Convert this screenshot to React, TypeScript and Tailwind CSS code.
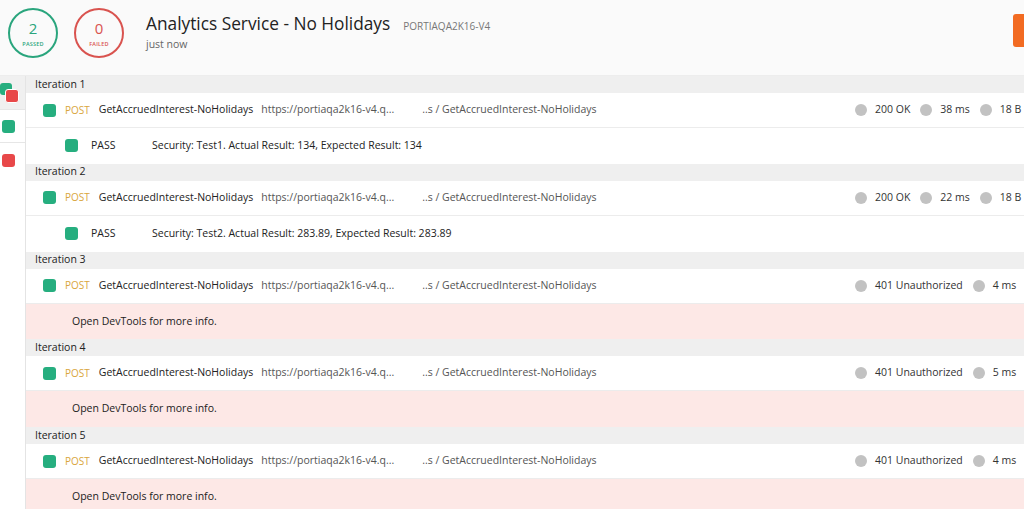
import React from 'react';

type Iter = {
  n: number;
  status: string;
  time: string;
  size?: string;
  pass?: string;
};

const iterations: Iter[] = [
  { n: 1, status: '200 OK', time: '38 ms', size: '18 B', pass: 'Security: Test1. Actual Result: 134, Expected Result: 134' },
  { n: 2, status: '200 OK', time: '22 ms', size: '18 B', pass: 'Security: Test2. Actual Result: 283.89, Expected Result: 283.89' },
  { n: 3, status: '401 Unauthorized', time: '4 ms' },
  { n: 4, status: '401 Unauthorized', time: '5 ms' },
  { n: 5, status: '401 Unauthorized', time: '4 ms' },
];

function Stat({ label }: { label: string }) {
  return (
    <span className="flex items-center shrink-0">
      <span className="w-[12px] h-[12px] rounded-full bg-[#c2c2c2]" />
      <span className="ml-[8px] mr-[10px]">{label}</span>
    </span>
  );
}

function Counter({ value, label, color }: { value: number; label: string; color: string }) {
  return (
    <div className={`w-[50px] h-[50px] rounded-full border-2 flex flex-col items-center justify-center ${color}`}>
      <span className="text-[15px] leading-[16px] mt-[2px]">{value}</span>
      <span className="text-[5.5px] leading-[8px] mt-[4px] font-semibold tracking-[0.2px]">{label}</span>
    </div>
  );
}

export default function App() {
  return (
    <div className="w-[1024px] h-[509px] overflow-hidden bg-white text-[#333] whitespace-nowrap" style={{ fontFamily: '"Open Sans", "Noto Sans", sans-serif' }}>
      <header className="h-[76px] bg-[#fafafa] flex items-start pl-[8px] pt-[8px] border-b border-[#ededed]">
        <Counter value={2} label="PASSED" color="border-[#2aa57d] text-[#2aa57d]" />
        <div className="ml-[16px]">
          <Counter value={0} label="FAILED" color="border-[#d9534f] text-[#d9534f]" />
        </div>
        <div className="ml-[22px] pt-[4px]">
          <div className="flex items-baseline">
            <span className="text-[17.3px] leading-[24px] text-[#222]">Analytics Service - No Holidays</span>
            <span className="ml-[13px] text-[10px] text-[#777]">PORTIAQA2K16-V4</span>
          </div>
          <div className="text-[10.5px] text-[#666] mt-[1px]">just now</div>
        </div>
        <div className="ml-auto mt-[6px] w-[11px] h-[33px] bg-[#f26b22] rounded-l-[3px]" />
      </header>

      <div className="flex">
        <aside className="w-[26px] shrink-0 border-r border-[#e4e4e4] h-[433px] bg-white">
          <div className="relative h-[34px] bg-[#f0f0f0] border-b border-[#e6e6e6]">
            <span className="absolute left-0 top-[7px] w-[12px] h-[12px] rounded-[3px] bg-[#26ae7f]" />
            <span className="absolute left-[5px] top-[13px] w-[14px] h-[14px] rounded-[3px] bg-[#e84849] border border-white" />
          </div>
          <div className="h-[33px] border-b border-[#e6e6e6] flex items-center pl-[2px]">
            <span className="w-[13px] h-[13px] rounded-[3px] bg-[#26ae7f]" />
          </div>
          <div className="h-[34px] flex items-center pl-[2px]">
            <span className="w-[13px] h-[13px] rounded-[3px] bg-[#e84849]" />
          </div>
        </aside>

        <main className="flex-1 text-[10.5px]">
          {iterations.map((it) => (
            <div key={it.n}>
              <div className="h-[17px] bg-[#efefef] pl-[9px] flex items-center text-[10.5px] text-[#222]">Iteration {it.n}</div>
              <div className="h-[35px] flex items-center border-b border-[#ececec] bg-white">
                <div className="flex items-center flex-1 pl-[17px]">
                  <span className="w-[13px] h-[13px] rounded-[3px] bg-[#26ae7f] shrink-0" />
                  <span className="ml-[9px] text-[10px] text-[#d9a63c]">POST</span>
                  <span className="ml-[9px] text-[#222]">GetAccruedInterest-NoHolidays</span>
                  <span className="ml-[8px] w-[161px] text-[#555]">https://portiaqa2k16-v4.q...</span>
                  <span className="text-[#555]">..s / GetAccruedInterest-NoHolidays</span>
                </div>
                <div className="w-[169px] shrink-0 flex items-center text-[#333]">
                  <Stat label={it.status} />
                  <Stat label={it.time} />
                  {it.size && <Stat label={it.size} />}
                </div>
              </div>
              {it.pass ? (
                <div className="h-[35.75px] flex items-center bg-white pl-[39px]">
                  <span className="w-[13px] h-[13px] rounded-[3px] bg-[#26ae7f] shrink-0" />
                  <span className="ml-[13px] w-[61px] text-[#222]">PASS</span>
                  <span className="text-[#222]">{it.pass}</span>
                </div>
              ) : (
                <div className="h-[35.75px] flex items-center bg-[#fde8e6] pl-[46px] text-[#222]">Open DevTools for more info.</div>
              )}
            </div>
          ))}
        </main>
      </div>
    </div>
  );
}
